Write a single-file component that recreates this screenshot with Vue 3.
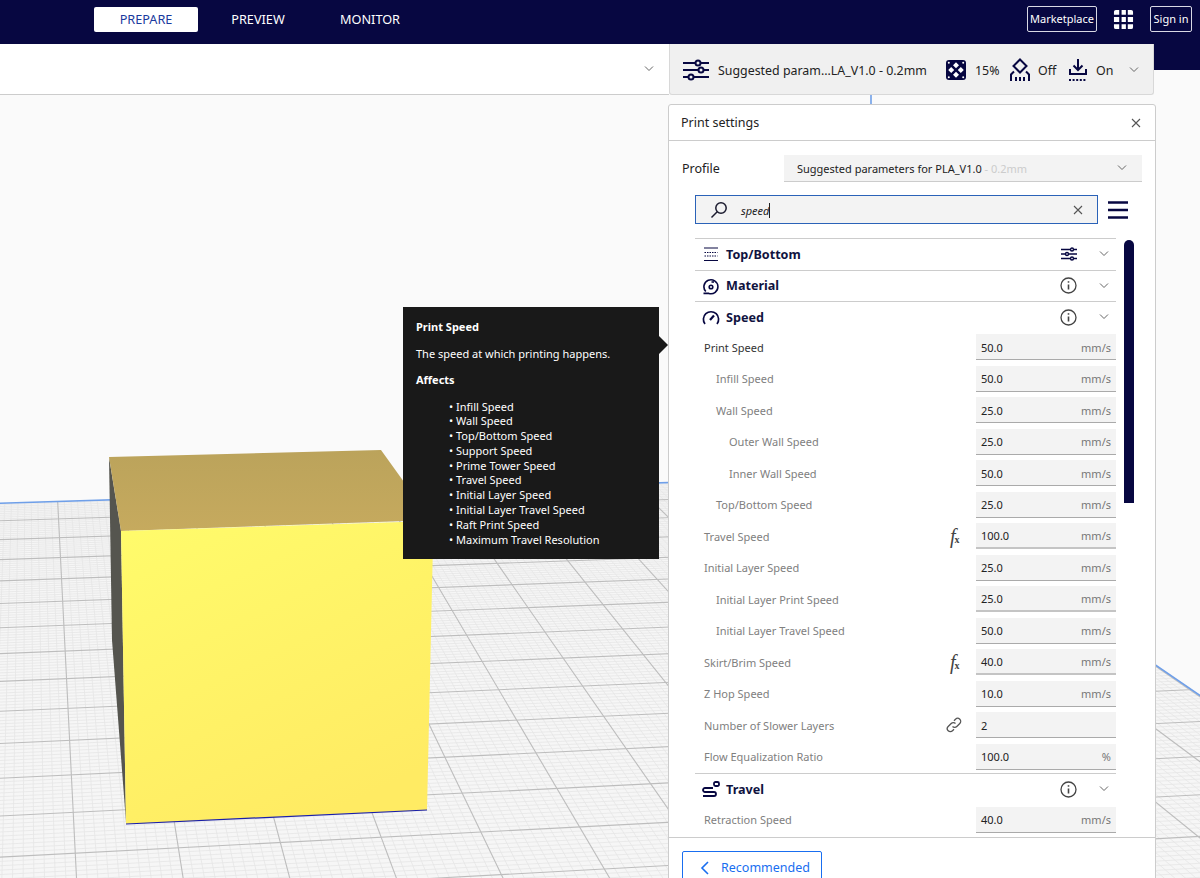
<template>
  <div class="page">
    <!-- 3d build plate, free canvas behind the ui -->
    <svg class="scene" width="1200" height="878" viewBox="0 0 1200 878">
      <defs>
        <clipPath id="plate"><polygon points="-10,503.3 879.6,476 1230,716 1230,900 -10,900" /></clipPath>
        <linearGradient id="front" x1="0.1" y1="0" x2="0.6" y2="1">
          <stop offset="0" stop-color="#fffb6b" />
          <stop offset="1" stop-color="#ffeb63" />
        </linearGradient>
        <linearGradient id="top" x1="0" y1="0" x2="0" y2="1">
          <stop offset="0" stop-color="#bba35b" />
          <stop offset="1" stop-color="#c6aa5e" />
        </linearGradient>
      </defs>
      <polygon points="-10,503.3 879.6,476 1230,716 1230,900 -10,900" fill="#f6f6f6" />
      <g clip-path="url(#plate)">
        <line v-for="(l, i) in minorLines" :key="'m' + i" :x1="l.x1" :y1="l.y1" :x2="l.x2" :y2="l.y2" stroke="#e6e6e6" stroke-width="0.8" />
        <line v-for="(l, i) in majorLines" :key="'M' + i" :x1="l.x1" :y1="l.y1" :x2="l.x2" :y2="l.y2" stroke="#bdbdbd" stroke-width="1.1" />
      </g>
      <polyline points="0,503.3 879.6,476 1230,716" fill="none" stroke="#6f9fe8" stroke-width="1.6" />
      <line x1="871" y1="95" x2="871" y2="104" stroke="#6f9fe8" stroke-width="1.6" />
      <polygon points="109,457 121,531 126,822 112,640" fill="#55554f" />
      <polygon points="109,457 381,450 404,482 433,520 121,531" fill="url(#top)" />
      <polygon points="121,531 433.5,521 427,810 126,824" fill="url(#front)" />
      <line x1="126" y1="824" x2="427" y2="810" stroke="#1a1fa8" stroke-width="1.2" />
    </svg>

    <header class="topbar">
      <nav class="tabs">
        <a class="tab active">PREPARE</a>
        <a class="tab">PREVIEW</a>
        <a class="tab">MONITOR</a>
      </nav>
      <a class="top-btn market">Marketplace</a>
      <svg class="apps" width="21" height="21" viewBox="0 0 22 22" fill="#fff">
        <path d="M3 1h3.500v5H1V3a2 2 0 0 1 2-2zM9 1h4.500v5H9zM15.500 1H19a2 2 0 0 1 2 2v3h-5.500zM1 8.500h5.500v5H1zM9 8.500h4.500v5H9zM15.500 8.500H21v5h-5.500zM1 16h5.500v5H3a2 2 0 0 1-2-2zM9 16h4.500v5H9zM15.500 16H21v3a2 2 0 0 1-2 2h-3.500z" />
      </svg>
      <a class="top-btn signin">Sign in</a>
    </header>

    <div class="subbar">
      <div class="subbar-left">
        <svg class="chev" width="12" height="8" viewBox="0 0 12 8"><path d="M2 1.500l4 4 4-4" /></svg>
      </div>
      <div class="summary">
        <svg class="sum-sliders" width="26" height="22" viewBox="0 0 26 22" fill="none" stroke="#070741" stroke-width="2">
          <path d="M0 4h12M18 4h8M0 11h15M21 11h5M0 18h5M11 18h15" />
          <circle cx="15" cy="4" r="2.500" /><circle cx="18" cy="11" r="2.500" /><circle cx="8" cy="18" r="2.500" />
        </svg>
        <span class="sum-name">Suggested param...LA_V1.0 - 0.2mm</span>
        <svg class="sum-infill" width="20" height="20" viewBox="0 0 20 20">
          <rect width="20" height="20" rx="3" fill="#070741" />
          <g fill="#fff">
            <path d="M10 2.200l3 3-3 3-3-3zM10 11.800l3 3-3 3-3-3zM5.200 7l3 3-3 3-3-3zM14.800 7l3 3-3 3-3-3z" />
            <circle cx="2.800" cy="2.800" r="1" /><circle cx="17.200" cy="2.800" r="1" /><circle cx="2.800" cy="17.200" r="1" /><circle cx="17.200" cy="17.200" r="1" />
          </g>
        </svg>
        <span class="sum-val infill-val">15%</span>
        <svg class="sum-support" width="20" height="24" viewBox="0 0 20 24" fill="none" stroke="#070741" stroke-width="2">
          <path d="M10 1.500l6.500 6.500-6.500 6.500L3.500 8z" />
          <path d="M1 23v-6.500l3-3M19 23v-6.500l-3-3M6 23v-4M10 23v-4M14 23v-4" />
        </svg>
        <span class="sum-val off-val">Off</span>
        <svg class="sum-adhesion" width="20" height="24" viewBox="0 0 20 24" fill="none" stroke="#070741" stroke-width="2">
          <path d="M10 1v10M5.500 7.500l4.500 4.500 4.500-4.500" />
          <path d="M2 11v5h16v-5" />
          <path d="M1 22h18" stroke-dasharray="2 1.600" />
        </svg>
        <span class="sum-val on-val">On</span>
        <svg class="chev sum-chev" width="12" height="8" viewBox="0 0 12 8"><path d="M2 1.500l4 4 4-4" /></svg>
      </div>
      <div class="subbar-right"></div>
    </div>

    <main class="stage">
      <section class="panel">
        <div class="panel-head">
          <span>Print settings</span>
          <svg class="close" width="10" height="10" viewBox="0 0 10 10"><path d="M1 1l8 8M9 1l-8 8" /></svg>
        </div>
        <div class="panel-body">
          <div class="profile">
            <span class="profile-label">Profile</span>
            <div class="select">
              <span>Suggested parameters for PLA_V1.0<em> - 0.2mm</em></span>
              <svg class="chev" width="12" height="8" viewBox="0 0 12 8"><path d="M2 1.500l4 4 4-4" /></svg>
            </div>
          </div>
          <div class="search-row">
            <div class="search">
              <svg width="18" height="18" viewBox="0 0 18 18" fill="none" stroke="#1b1b2f" stroke-width="1.500">
                <circle cx="11" cy="7" r="5.200" /><path d="M7.200 10.800L1.500 16.500" />
              </svg>
              <span class="query">speed</span><span class="caret"></span>
              <svg class="clear" width="10" height="10" viewBox="0 0 10 10"><path d="M1 1l8 8M9 1l-8 8" /></svg>
            </div>
            <svg class="menu" width="20" height="18" viewBox="0 0 20 18" fill="none" stroke="#070741" stroke-width="2.400"><path d="M0 1.500h20M0 9h20M0 16.500h20" /></svg>
          </div>
          <div class="settings">
            <div class="thumb"></div>
            <template v-for="sec in sections" :key="sec.title">
              <div class="section" :class="{ tall: sec.tall }">
                <svg v-if="sec.icon === 'layers'" class="sec-icon" width="18" height="16" viewBox="0 0 18 16" fill="none" stroke="#070741" stroke-width="1.200">
                  <path d="M2 2h14M2 14.500h14" /><path d="M2.500 6.500h13M2.500 10h13" stroke-dasharray="1.500 1" />
                </svg>
                <svg v-else-if="sec.icon === 'material'" class="sec-icon" width="18" height="18" viewBox="0 0 18 18" fill="none" stroke="#070741" stroke-width="1.600">
                  <path d="M3.800 14.500a7 7 0 1 1 3 1.900H1.500" /><circle cx="9" cy="10" r="1.800" /><path d="M9.500 5h2.500" />
                </svg>
                <svg v-else-if="sec.icon === 'speed'" class="sec-icon" width="18" height="16" viewBox="0 0 18 16" fill="none" stroke="#070741" stroke-width="1.700">
                  <path d="M3 15a7.600 7.600 0 1 1 12 0" /><path d="M8 11l4-4.500" stroke-width="2.200" />
                </svg>
                <svg v-else class="sec-icon" width="18" height="16" viewBox="0 0 18 16" fill="none" stroke="#070741" stroke-width="1.800">
                  <path d="M1 15h11a2 2 0 0 0 0-4H3a2 2 0 0 1 0-4h8" /><rect x="12" y="1" width="5" height="4" rx="1.500" />
                </svg>
                <span class="sec-title">{{ sec.title }}</span>
                <svg v-if="sec.tune" class="sec-tune" width="16" height="14" viewBox="0 0 16 14" fill="none" stroke="#070741" stroke-width="1.400">
                  <path d="M0 2.500h9M13 2.500h3M0 7h4M8 7h8M0 11.500h9M13 11.500h3" /><circle cx="11" cy="2.500" r="1.500" /><circle cx="6" cy="7" r="1.500" /><circle cx="11" cy="11.500" r="1.500" />
                </svg>
                <svg v-else class="sec-info" width="17" height="17" viewBox="0 0 17 17" fill="none" stroke="#444" stroke-width="1.300">
                  <circle cx="8.500" cy="8.500" r="7.500" /><path d="M8.500 7.500v5" stroke-width="1.600" /><path d="M8.500 4.200v1.500" stroke-width="1.600" />
                </svg>
                <svg class="chev sec-chev" width="12" height="8" viewBox="0 0 12 8"><path d="M2 1.500l4 4 4-4" /></svg>
              </div>
              <div v-for="row in sec.rows" :key="row.label" class="row" :class="{ lead: row.lead }">
                <span class="row-label" :class="'indent' + (row.indent || 0)">{{ row.label }}</span>
                <span v-if="row.fx" class="fx">f<i>x</i></span>
                <svg v-if="row.link" class="link" width="16" height="16" viewBox="0 0 16 16" fill="none" stroke="#555" stroke-width="1.300">
                  <path d="M6.500 9.500a3 3 0 0 0 4.300 0l3-3a3 3 0 0 0-4.300-4.300L8 3.700" /><path d="M9.500 6.500a3 3 0 0 0-4.300 0l-3 3a3 3 0 0 0 4.300 4.300L8 12.300" />
                </svg>
                <div class="field" :class="{ heavy: row.fx || row.heavy }">
                  <span class="field-val">{{ row.value }}</span>
                  <span class="field-unit">{{ row.unit }}</span>
                </div>
              </div>
            </template>
          </div>
        </div>
        <div class="panel-foot">
          <a class="recommended">
            <svg width="10" height="14" viewBox="0 0 10 14" fill="none" stroke="#196ef0" stroke-width="1.600"><path d="M8 1L2 7l6 6" /></svg>
            Recommended
          </a>
        </div>
      </section>

      <aside class="tooltip">
        <p class="tip-title">Print Speed</p>
        <p class="tip-text">The speed at which printing happens.</p>
        <p class="tip-title">Affects</p>
        <ul class="tip-list">
          <li v-for="item in affects" :key="item">• {{ item }}</li>
        </ul>
      </aside>
    </main>
  </div>
</template>

<script setup>
const affects = [
  'Infill Speed',
  'Wall Speed',
  'Top/Bottom Speed',
  'Support Speed',
  'Prime Tower Speed',
  'Travel Speed',
  'Initial Layer Speed',
  'Initial Layer Travel Speed',
  'Raft Print Speed',
  'Maximum Travel Resolution'
]

const mm = 'mm/s'
const sections = [
  { title: 'Top/Bottom', icon: 'layers', tune: true, rows: [] },
  { title: 'Material', icon: 'material', rows: [] },
  {
    title: 'Speed',
    icon: 'speed',
    rows: [
      { label: 'Print Speed', value: '50.0', unit: mm, lead: true },
      { label: 'Infill Speed', indent: 1, value: '50.0', unit: mm },
      { label: 'Wall Speed', indent: 1, value: '25.0', unit: mm },
      { label: 'Outer Wall Speed', indent: 2, value: '25.0', unit: mm },
      { label: 'Inner Wall Speed', indent: 2, value: '50.0', unit: mm },
      { label: 'Top/Bottom Speed', indent: 1, value: '25.0', unit: mm },
      { label: 'Travel Speed', value: '100.0', unit: mm, fx: true },
      { label: 'Initial Layer Speed', value: '25.0', unit: mm },
      { label: 'Initial Layer Print Speed', indent: 1, value: '25.0', unit: mm, heavy: true },
      { label: 'Initial Layer Travel Speed', indent: 1, value: '50.0', unit: mm },
      { label: 'Skirt/Brim Speed', value: '40.0', unit: mm, fx: true },
      { label: 'Z Hop Speed', value: '10.0', unit: mm },
      { label: 'Number of Slower Layers', value: '2', unit: '', link: true },
      { label: 'Flow Equalization Ratio', value: '100.0', unit: '%' }
    ]
  },
  {
    title: 'Travel',
    icon: 'travel',
    tall: true,
    rows: [{ label: 'Retraction Speed', value: '40.0', unit: mm }]
  }
]

// perspective of the plate, measured off the screenshot
const vp = { x: 27, y: -112 }
const side = (s) => ({ x1: vp.x + s * 560, y1: 448, x2: vp.x + s * 1012, y2: 900 })
const across = (k) => {
  const y0 = -112 + 1 / (0.001626 - 0.0000457 * k)
  const slope = (y0 + 7) / 16620
  return { x1: -10, y1: y0 + slope * 10, x2: 1230, y2: y0 - slope * 1230 }
}

const majorLines = []
const minorLines = []
for (let k = -1; k <= 13; k++) {
  majorLines.push(side(0.05 + 0.1077 * k))
  for (let m = 1; m < 10 && k < 13; m++) minorLines.push(side(0.05 + 0.1077 * (k + m / 10)))
}
for (let k = 1; k <= 15; k++) majorLines.push(across(k))
for (let k = 0; k < 15; k++) {
  for (let m = 1; m < 10; m++) minorLines.push(across(k + m / 10))
}
</script>

<style>
html, body {
  margin: 0;
  background: #fafafa;
}
</style>

<style scoped>
.page {
  position: relative;
  width: 1200px;
  height: 878px;
  overflow: hidden;
  background: #fafafa;
  font-family: "Noto Sans", sans-serif;
  color: #222;
}

.scene {
  position: absolute;
  left: 0;
  top: 0;
}

.chev {
  flex: none;
  fill: none;
  stroke: #666;
  stroke-width: 1;
}

.topbar {
  position: relative;
  display: flex;
  align-items: center;
  height: 44px;
  padding: 0 8px 0 94px;
  box-sizing: border-box;
  background: #070741;
}

.tabs {
  display: flex;
  flex: 1;
  margin-top: -6px;
}

.tab {
  width: 104px;
  height: 25px;
  margin-right: 8px;
  line-height: 25px;
  text-align: center;
  font-size: 12.7px;
  color: #fff;
  border-radius: 2px;
}

.tab.active {
  background: #fff;
  color: #1a3a9e;
}

.top-btn {
  height: 26px;
  margin-top: -6px;
  line-height: 24px;
  box-sizing: border-box;
  border: 1px solid #d8d8e4;
  border-radius: 2px;
  text-align: center;
  font-size: 11px;
  color: #fff;
}

.market {
  width: 70px;
}

.apps {
  margin: -6px 16px 0 16px;
}

.signin {
  width: 42px;
}

.subbar {
  position: relative;
  display: flex;
  height: 51px;
}

.subbar-left {
  display: flex;
  align-items: center;
  justify-content: flex-end;
  width: 669px;
  padding-right: 14px;
  box-sizing: border-box;
  background: #fff;
  border-bottom: 1px solid #ccc;
}

.summary {
  display: flex;
  align-items: center;
  width: 485px;
  padding-top: 2px;
  box-sizing: border-box;
  background: #f0f0f0;
  border: 1px solid #d8d8d8;
  border-top: 0;
  border-radius: 0 0 3px 3px;
  font-size: 12.4px;
  color: #222;
}

.summary svg,
.summary span {
  flex: none;
}

.subbar-right {
  flex: 1;
  background: linear-gradient(#070741 26px, transparent 26px);
}

.sum-sliders {
  margin-left: 13px;
}

.sum-name {
  width: 228px;
  margin-left: 9px;
}

.sum-support {
  margin-left: 11px;
}

.sum-adhesion {
  margin-left: 12px;
}

.infill-val {
  width: 24px;
  margin-left: 9px;
}

.off-val {
  width: 18px;
  margin-left: 8px;
}

.on-val {
  width: 17px;
  margin-left: 8px;
}

.sum-chev {
  margin-left: 15px;
}

.stage {
  position: relative;
  padding: 9px 0 0 668px;
}

.panel {
  position: relative;
  display: flex;
  flex-direction: column;
  width: 488px;
  height: 790px;
  box-sizing: border-box;
  background: #fff;
  border: 1px solid #ccc;
  border-radius: 3px;
}

.panel-head {
  display: flex;
  align-items: center;
  justify-content: space-between;
  height: 35px;
  flex: none;
  padding: 0 14px 0 12px;
  border-bottom: 1px solid #ccc;
  font-size: 12.5px;
}

.close path,
.clear path {
  fill: none;
  stroke: #555;
  stroke-width: 1.1;
}

.panel-body {
  height: 696px;
  flex: none;
  overflow: hidden;
  padding-left: 26px;
}

.profile {
  display: flex;
  align-items: center;
  margin: 14px 0 13px -13px;
}

.profile-label {
  width: 102px;
  font-size: 12.5px;
}

.select {
  display: flex;
  align-items: center;
  justify-content: space-between;
  width: 358px;
  height: 27px;
  padding: 0 14px 0 13px;
  box-sizing: border-box;
  background: #f3f3f3;
  border-bottom: 1px solid #ccc;
  font-size: 11px;
}

.select em {
  font-style: normal;
  color: #ccc;
}

.search-row {
  display: flex;
  align-items: center;
  gap: 10px;
  margin-bottom: 14px;
}

.search {
  display: flex;
  align-items: center;
  width: 403px;
  height: 29px;
  padding: 0 14px;
  box-sizing: border-box;
  background: #f3f3f3;
  border: 1px solid #2a62b8;
  font-size: 11px;
}

.query {
  margin: 2px 0 0 13px;
  font-style: italic;
  color: #222;
}

.caret {
  width: 1px;
  height: 15px;
  margin-top: 2px;
  background: #222;
}

.clear {
  margin-left: auto;
}

.settings {
  position: relative;
  width: 421px;
}

.thumb {
  position: absolute;
  left: 429px;
  top: 2px;
  width: 10px;
  height: 263px;
  border-radius: 5px 5px 0 0;
  background: #070741;
}

.section {
  display: flex;
  align-items: center;
  height: 31.5px;
  box-sizing: border-box;
  border-top: 1px solid #ccc;
}

.section.tall {
  height: 32.5px;
}

.sec-icon {
  flex: none;
  margin-left: 7px;
}

.sec-title {
  margin-left: 6px;
  font-size: 12.6px;
  font-weight: 700;
  color: #10133f;
}

.sec-tune {
  margin-left: auto;
  margin-right: 21px;
}

.sec-info {
  margin-left: auto;
  margin-right: 21px;
}

.sec-chev {
  margin-right: 6px;
}

.section + .row {
  margin-top: -1px;
}

.row {
  display: flex;
  align-items: center;
  height: 31.5px;
  font-size: 11px;
  color: #808080;
}

.row.lead {
  color: #333;
}

.row-label {
  flex: 1;
  padding-left: 9px;
}

.indent1 {
  padding-left: 21px;
}

.indent2 {
  padding-left: 34px;
}

.fx {
  width: 14px;
  margin-right: 12px;
  font-family: "Liberation Serif", serif;
  font-style: italic;
  font-size: 20px;
  line-height: 1;
  color: #444;
}

.fx i {
  font-size: 10px;
  font-weight: 700;
  font-style: normal;
  margin-left: -1px;
}

.link {
  margin-right: 14px;
}

.field {
  display: flex;
  align-items: center;
  justify-content: space-between;
  width: 140px;
  height: 26px;
  padding: 1px 5px 0;
  box-sizing: border-box;
  background: #f3f3f3;
  border-bottom: 1px solid #aaa;
}

.field.heavy {
  border-bottom: 2px solid #c4c4c4;
}

.field-val {
  color: #222;
}

.field-unit {
  color: #777;
}

.panel-foot {
  flex: none;
  padding: 13px 13px;
  border-top: 1px solid #ccc;
}

.recommended {
  display: flex;
  align-items: center;
  gap: 11px;
  width: 140px;
  height: 33px;
  padding-left: 17px;
  box-sizing: border-box;
  border: 1px solid #196ef0;
  border-radius: 2px;
  font-size: 12.5px;
  color: #196ef0;
}

.tooltip {
  position: absolute;
  left: 403px;
  top: 212px;
  width: 256px;
  height: 252px;
  padding: 12px 13px;
  box-sizing: border-box;
  background: #191919;
  color: #fff;
  font-size: 11px;
  line-height: 15px;
}

.tooltip::after {
  content: "";
  position: absolute;
  left: 256px;
  top: 29px;
  border-left: 9px solid #191919;
  border-top: 9px solid transparent;
  border-bottom: 9px solid transparent;
}

.tooltip p {
  margin: 0 0 11.5px;
}

.tip-title {
  font-weight: 700;
}

.tip-list {
  margin: 0;
  padding: 1px 0 0 33px;
  list-style: none;
  line-height: 14.8px;
}
</style>
